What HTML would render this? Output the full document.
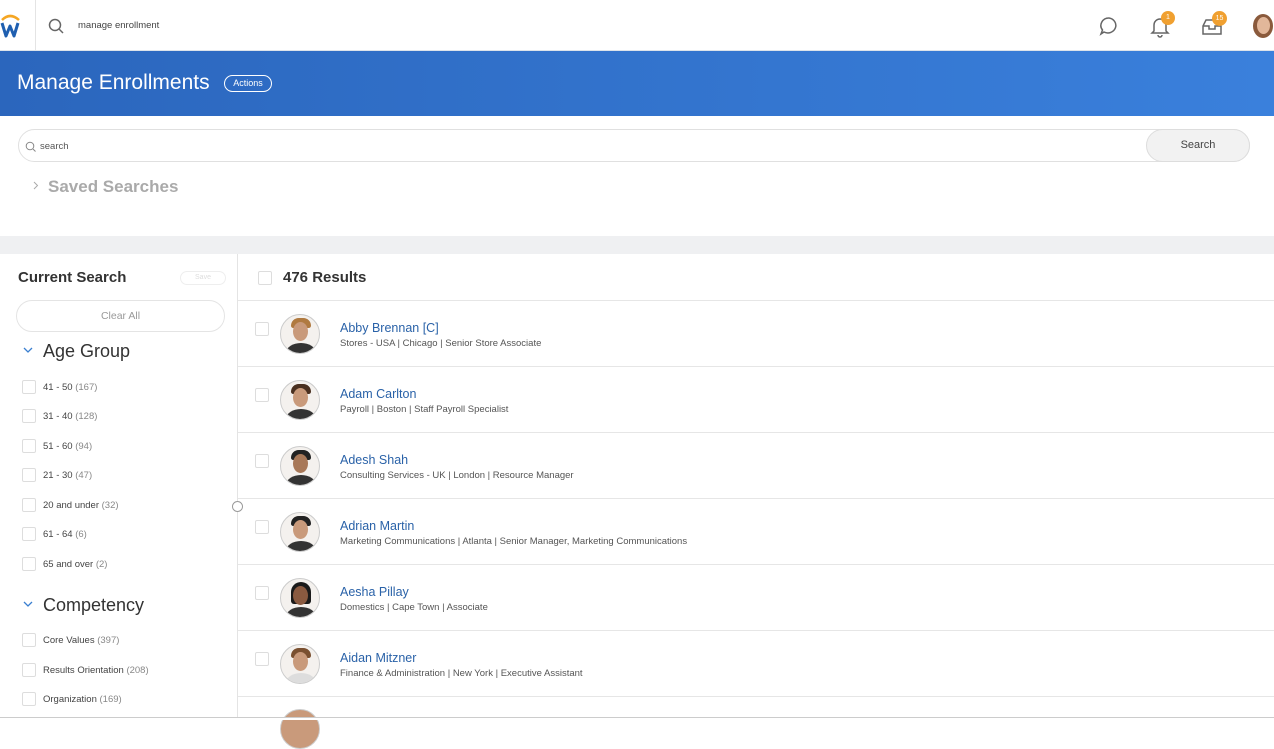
<!DOCTYPE html>
<html><head><style>
*{margin:0;padding:0;box-sizing:border-box}
body{width:1274px;height:720px;overflow:hidden;background:#fff;font-family:"Liberation Sans",sans-serif;position:relative;color:#333}
.a{position:absolute}
.cb{position:absolute;width:14px;height:14px;border:1px solid #ddd;border-radius:2px;background:#fff}
.fl{position:absolute;left:43px;font-size:9.5px;color:#444}
.fl span{color:#888}
.row{position:absolute;left:238px;right:0;height:66px;border-bottom:1px solid #e6e6e6}
.av{position:absolute;left:42px;top:13px;width:40px;height:40px;border-radius:50%;border:1px solid #ccc;overflow:hidden;background:#f4f1ee}
.av i{position:absolute;left:12px;top:7px;width:15px;height:19px;border-radius:50%;background:#c99a7b}
.av b{position:absolute;left:5px;top:28px;width:30px;height:20px;border-radius:50% 50% 0 0;background:#333}
.av u{position:absolute;left:10px;top:3px;width:20px;height:10px;border-radius:10px 10px 3px 3px;background:#4a3020}
.nm{position:absolute;left:102px;top:20px;font-size:12.5px;color:#2a62a8}
.ds{position:absolute;left:102px;top:37px;font-size:9.5px;color:#555}
</style></head><body>
<div class="a" style="left:0;top:0;width:1274px;height:51px;border-bottom:1px solid #dde3ea"></div>
<div class="a" style="left:35px;top:0;width:1px;height:50px;background:#e4e4e4"></div>
<svg class="a" style="left:0;top:12px" width="26" height="28"><path d="M2 8 Q10 0 19 8" stroke="#f5a623" stroke-width="2.5" fill="none"/><path d="M2 11 L6 24 L10 14 L14 24 L18 11" stroke="#1f5fb0" stroke-width="3" fill="none" stroke-linejoin="round"/></svg>
<svg class="a" style="left:48px;top:18px" width="16" height="16"><circle cx="7" cy="7" r="5.5" stroke="#666" stroke-width="1.5" fill="none"/><path d="M11 11 L15 15" stroke="#666" stroke-width="1.5"/></svg>
<div class="a" style="left:78px;top:20px;font-size:9.5px;color:#444">manage enrollment</div>
<svg class="a" style="left:1099px;top:16px" width="20" height="20"><path d="M10 2 A8 7.5 0 1 1 5 16 L2 18 L3.5 14 A8 7.5 0 0 1 10 2Z" stroke="#666" stroke-width="1.5" fill="none"/></svg>
<svg class="a" style="left:1150px;top:16px" width="20" height="22"><path d="M4 15 L4 9 A6 6 0 0 1 16 9 L16 15 L18 17 L2 17 Z M8 19 A2 2 0 0 0 12 19" stroke="#666" stroke-width="1.5" fill="none"/></svg>
<div class="a" style="left:1161px;top:11px;width:14px;height:14px;border-radius:50%;background:#f0a030;color:#fff;font-size:7px;text-align:center;line-height:14px">1</div>
<svg class="a" style="left:1201px;top:17px" width="22" height="20"><path d="M2 9 L5 3 L17 3 L20 9 L20 17 L2 17 Z M2 9 L8 9 L8 12 L14 12 L14 9 L20 9" stroke="#666" stroke-width="1.5" fill="none"/></svg>
<div class="a" style="left:1212px;top:11px;width:15px;height:15px;border-radius:50%;background:#f0a030;color:#fff;font-size:7px;text-align:center;line-height:15px">15</div>
<div class="a" style="left:1253px;top:14px;width:20px;height:24px;border-radius:50%;background:#8a5a3c"></div>
<div class="a" style="left:1257px;top:17px;width:13px;height:17px;border-radius:50%;background:#e2b79a"></div>
<div class="a" style="left:0;top:51px;width:1274px;height:65px;background:linear-gradient(90deg,#2b66bd,#3a80dc)"></div>
<div class="a" style="left:17px;top:71px;font-size:21px;color:#fff">Manage Enrollments</div>
<div class="a" style="left:224px;top:75px;width:48px;height:17px;border:1.5px solid #fff;border-radius:9px;color:#fff;font-size:9px;text-align:center;line-height:14px">Actions</div>
<div class="a" style="left:18px;top:129px;width:1232px;height:33px;border:1px solid #e0e0e0;border-radius:17px"></div>
<svg class="a" style="left:25px;top:141px" width="11" height="11"><circle cx="5" cy="5" r="3.8" stroke="#888" stroke-width="1" fill="none"/><path d="M8 8 L10.5 10.5" stroke="#888"/></svg>
<div class="a" style="left:40px;top:141px;font-size:9.5px;color:#555">search</div>
<div class="a" style="left:1146px;top:129px;width:104px;height:33px;border:1px solid #ddd;border-radius:17px;background:#f2f2f2;font-size:11px;color:#444;text-align:center;line-height:31px">Search</div>
<svg class="a" style="left:33px;top:181px" width="6" height="9"><path d="M1 1 L4.5 4.5 L1 8" stroke="#aaa" fill="none"/></svg>
<div class="a" style="left:48px;top:177px;font-size:17px;font-weight:bold;color:#aaa">Saved Searches</div>
<div class="a" style="left:0;top:236px;width:1274px;height:18px;background:#eff0f2"></div>
<div class="a" style="left:237px;top:254px;width:1px;height:466px;background:#e4e4e4"></div>
<div class="a" style="left:18px;top:269px;font-size:15px;font-weight:bold;color:#333">Current Search</div>
<div class="a" style="left:180px;top:271px;width:46px;height:14px;border:1px solid #eee;border-radius:7px;font-size:7px;color:#ddd;text-align:center;line-height:12px">Save</div>
<div class="a" style="left:16px;top:300px;width:209px;height:32px;border:1px solid #e4e4e4;border-radius:16px;font-size:10.5px;color:#999;text-align:center;line-height:30px">Clear All</div>
<svg class="a" style="left:23px;top:347px" width="10" height="7"><path d="M1 1 L5 5 L9 1" stroke="#3a7fd0" stroke-width="1.3" fill="none"/></svg>
<div class="a" style="left:43px;top:341px;font-size:18px;color:#333">Age Group</div>
<div class="cb" style="left:22px;top:380px"></div><div class="fl" style="top:382px">41 - 50 <span>(167)</span></div>
<div class="cb" style="left:22px;top:409px"></div><div class="fl" style="top:411px">31 - 40 <span>(128)</span></div>
<div class="cb" style="left:22px;top:439px"></div><div class="fl" style="top:441px">51 - 60 <span>(94)</span></div>
<div class="cb" style="left:22px;top:468px"></div><div class="fl" style="top:470px">21 - 30 <span>(47)</span></div>
<div class="cb" style="left:22px;top:498px"></div><div class="fl" style="top:500px">20 and under <span>(32)</span></div>
<div class="cb" style="left:22px;top:527px"></div><div class="fl" style="top:529px">61 - 64 <span>(6)</span></div>
<div class="cb" style="left:22px;top:557px"></div><div class="fl" style="top:559px">65 and over <span>(2)</span></div>
<svg class="a" style="left:23px;top:601px" width="10" height="7"><path d="M1 1 L5 5 L9 1" stroke="#3a7fd0" stroke-width="1.3" fill="none"/></svg>
<div class="a" style="left:43px;top:595px;font-size:18px;color:#333">Competency</div>
<div class="cb" style="left:22px;top:633px"></div><div class="fl" style="top:635px">Core Values <span>(397)</span></div>
<div class="cb" style="left:22px;top:663px"></div><div class="fl" style="top:665px">Results Orientation <span>(208)</span></div>
<div class="cb" style="left:22px;top:692px"></div><div class="fl" style="top:694px">Organization <span>(169)</span></div>
<div class="a" style="left:232px;top:501px;width:11px;height:11px;border:1px solid #999;border-radius:50%;background:#fff"></div>
<div class="cb" style="left:258px;top:271px"></div>
<div class="a" style="left:283px;top:269px;font-size:15px;font-weight:bold;color:#333">476 Results</div>
<div class="a" style="left:238px;top:300px;width:1036px;height:1px;background:#e6e6e6"></div>
<div class="row" style="top:301px"><div class="cb" style="left:17px;top:21px"></div><div class="av"><u style="background:#b07a40"></u><i></i><b></b></div><div class="nm">Abby Brennan [C]</div><div class="ds">Stores - USA | Chicago | Senior Store Associate</div></div>
<div class="row" style="top:367px"><div class="cb" style="left:17px;top:21px"></div><div class="av"><u></u><i></i><b></b></div><div class="nm">Adam Carlton</div><div class="ds">Payroll | Boston | Staff Payroll Specialist</div></div>
<div class="row" style="top:433px"><div class="cb" style="left:17px;top:21px"></div><div class="av"><u style="background:#222"></u><i style="background:#a87858"></i><b></b></div><div class="nm">Adesh Shah</div><div class="ds">Consulting Services - UK | London | Resource Manager</div></div>
<div class="row" style="top:499px"><div class="cb" style="left:17px;top:21px"></div><div class="av"><u style="background:#222"></u><i></i><b></b></div><div class="nm">Adrian Martin</div><div class="ds">Marketing Communications | Atlanta | Senior Manager, Marketing Communications</div></div>
<div class="row" style="top:565px"><div class="cb" style="left:17px;top:21px"></div><div class="av"><u style="background:#1a1a1a;height:22px"></u><i style="background:#8a5a40"></i><b></b></div><div class="nm">Aesha Pillay</div><div class="ds">Domestics | Cape Town | Associate</div></div>
<div class="row" style="top:631px"><div class="cb" style="left:17px;top:21px"></div><div class="av"><u style="background:#7a5030"></u><i></i><b style="background:#ddd"></b></div><div class="nm">Aidan Mitzner</div><div class="ds">Finance &amp; Administration | New York | Executive Assistant</div></div>
<div class="a" style="left:280px;top:709px;width:40px;height:40px;border-radius:50%;border:1px solid #ccc;background:#c99a7b"></div>
<div class="a" style="left:0;top:717px;width:1274px;height:3px;background:#fff;border-top:1px solid #ccc"></div>
</body></html>
